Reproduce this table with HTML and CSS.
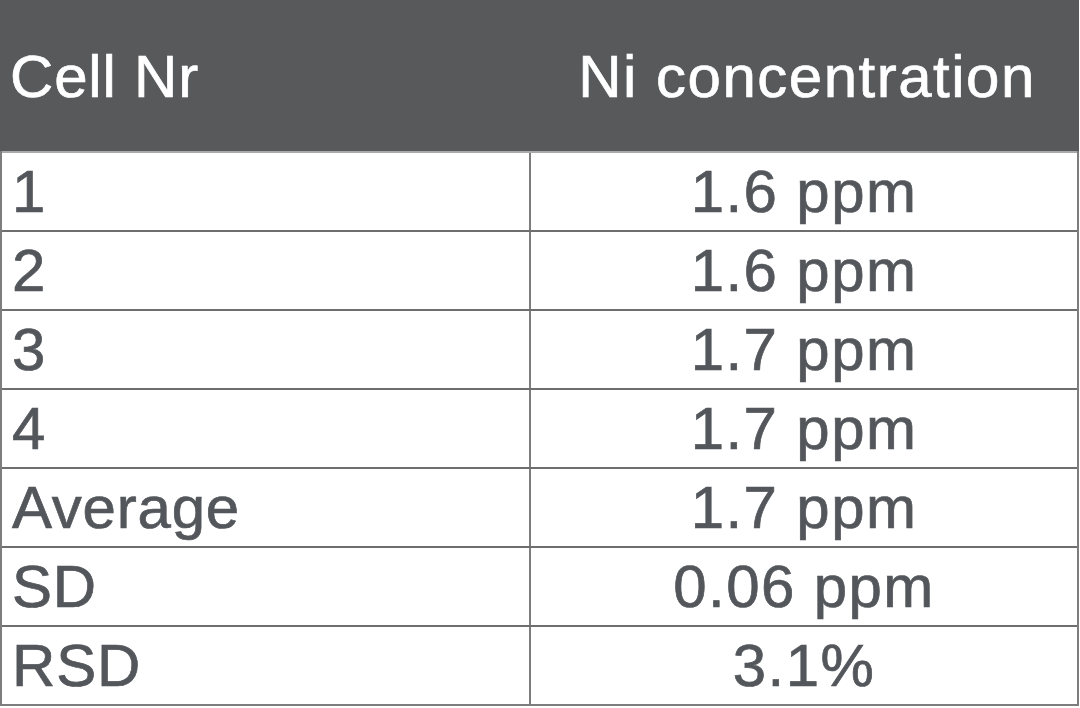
FILE: index.html
```html
<!DOCTYPE html>
<html>
<head>
<meta charset="utf-8">
<link rel="stylesheet" href="styles.css">
</head>
<body>
<div class="table">
  <div class="head">
    <div class="cell first">Cell Nr</div>
    <div class="cell second">Ni concentration</div>
  </div>
  <div class="body">
    <div class="row"><div class="cell first">1</div><div class="cell second">1.6 ppm</div></div>
    <div class="row"><div class="cell first">2</div><div class="cell second">1.6 ppm</div></div>
    <div class="row"><div class="cell first">3</div><div class="cell second">1.7 ppm</div></div>
    <div class="row"><div class="cell first">4</div><div class="cell second">1.7 ppm</div></div>
    <div class="row"><div class="cell first">Average</div><div class="cell second">1.7 ppm</div></div>
    <div class="row"><div class="cell first">SD</div><div class="cell second">0.06 ppm</div></div>
    <div class="row"><div class="cell first">RSD</div><div class="cell second">3.1%</div></div>
  </div>
</div>
</body>
</html>
```
FILE: styles.css
```css
html, body {
  margin: 0;
  padding: 0;
  background: #ffffff;
}
body {
  font-family: "Liberation Sans", Arial, sans-serif;
}
.table {
  width: 1079px;
  display: flex;
  flex-direction: column;
}
.head {
  height: 151px;
  background: #58595b;
  color: #ffffff;
  display: grid;
  grid-template-columns: 531px 1fr;
  font-size: 60px;
  -webkit-text-stroke: 0.7px #ffffff;
}
.head .cell {
  display: flex;
  align-items: center;
  padding-top: 2px;
}
.head .first {
  padding-left: 10px;
  letter-spacing: 0.8px;
}
.head .second {
  justify-content: center;
  padding-left: 4px;
  letter-spacing: 1.5px;
}
.body {
  border-left: 2px solid #7d7d7d;
  border-right: 2px solid #7d7d7d;
  border-bottom: 2px solid #7d7d7d;
  color: #53575b;
  font-size: 60px;
  -webkit-text-stroke: 0.7px #53575b;
}
.row {
  display: grid;
  grid-template-columns: 529px 1fr;
  height: 77px;
  border-top: 2px solid #6e6e6e;
}
.row:first-child {
  border-top-color: #a9a9a9;
}
.row .cell {
  display: flex;
  align-items: center;
}
.row .first {
  padding-left: 10px;
  letter-spacing: 0.8px;
  border-right: 2px solid #7d7d7d;
}
.row .second {
  justify-content: center;
  letter-spacing: 1.4px;
}
```
